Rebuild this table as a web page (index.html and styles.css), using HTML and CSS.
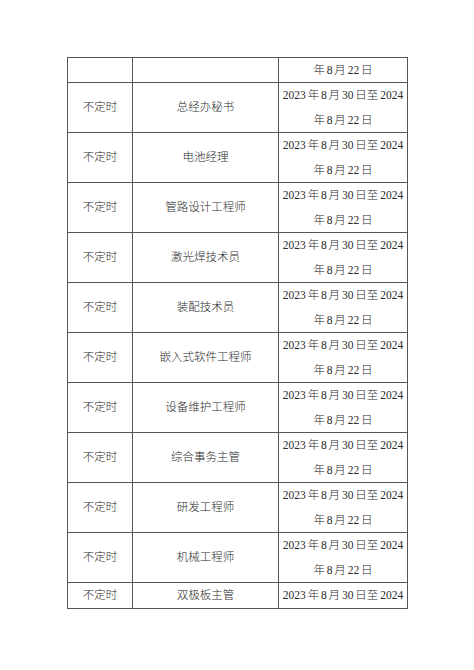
FILE: index.html
```html
<!DOCTYPE html>
<html lang="zh-CN">
<head>
<meta charset="utf-8">
<link rel="stylesheet" href="styles.css">
</head>
<body>
<table class="sheet">
  <colgroup>
    <col class="c1"><col class="c2"><col class="c3">
  </colgroup>
  <tr class="short"><td></td><td></td><td>年 8 月 22 日</td></tr>
  <tr><td>不定时</td><td>总经办秘书</td><td>2023 年 8 月 30 日至 2024<br>年 8 月 22 日</td></tr>
  <tr><td>不定时</td><td>电池经理</td><td>2023 年 8 月 30 日至 2024<br>年 8 月 22 日</td></tr>
  <tr><td>不定时</td><td>管路设计工程师</td><td>2023 年 8 月 30 日至 2024<br>年 8 月 22 日</td></tr>
  <tr><td>不定时</td><td>激光焊技术员</td><td>2023 年 8 月 30 日至 2024<br>年 8 月 22 日</td></tr>
  <tr><td>不定时</td><td>装配技术员</td><td>2023 年 8 月 30 日至 2024<br>年 8 月 22 日</td></tr>
  <tr><td>不定时</td><td>嵌入式软件工程师</td><td>2023 年 8 月 30 日至 2024<br>年 8 月 22 日</td></tr>
  <tr><td>不定时</td><td>设备维护工程师</td><td>2023 年 8 月 30 日至 2024<br>年 8 月 22 日</td></tr>
  <tr><td>不定时</td><td>综合事务主管</td><td>2023 年 8 月 30 日至 2024<br>年 8 月 22 日</td></tr>
  <tr><td>不定时</td><td>研发工程师</td><td>2023 年 8 月 30 日至 2024<br>年 8 月 22 日</td></tr>
  <tr><td>不定时</td><td>机械工程师</td><td>2023 年 8 月 30 日至 2024<br>年 8 月 22 日</td></tr>
  <tr class="last"><td>不定时</td><td>双极板主管</td><td>2023 年 8 月 30 日至 2024</td></tr>
</table>
</body>
</html>
```

FILE: styles.css
```css
html, body {
  margin: 0;
  padding: 0;
  background: #ffffff;
}
body {
  padding: 57px 0 0 67px;
  font-family: "Liberation Serif", "Noto Sans CJK SC", serif;
  font-size: 11.5px;
  font-weight: 300;
  color: #2a2a2a;
}
.sheet {
  border-collapse: collapse;
  table-layout: fixed;
  width: 340px;
}
.c1 { width: 65px; }
.c2 { width: 146px; }
.c3 { width: 129px; }
.sheet td {
  border: 1px solid #555555;
  padding: 0;
  height: 49px;
  text-align: center;
  vertical-align: middle;
  line-height: 24.5px;
  white-space: nowrap;
  overflow: hidden;
  word-spacing: -1px;
}
.sheet tr.short td { height: 24px; line-height: 24px; }
.sheet tr.last td { height: 25px; line-height: 25px; }
```
